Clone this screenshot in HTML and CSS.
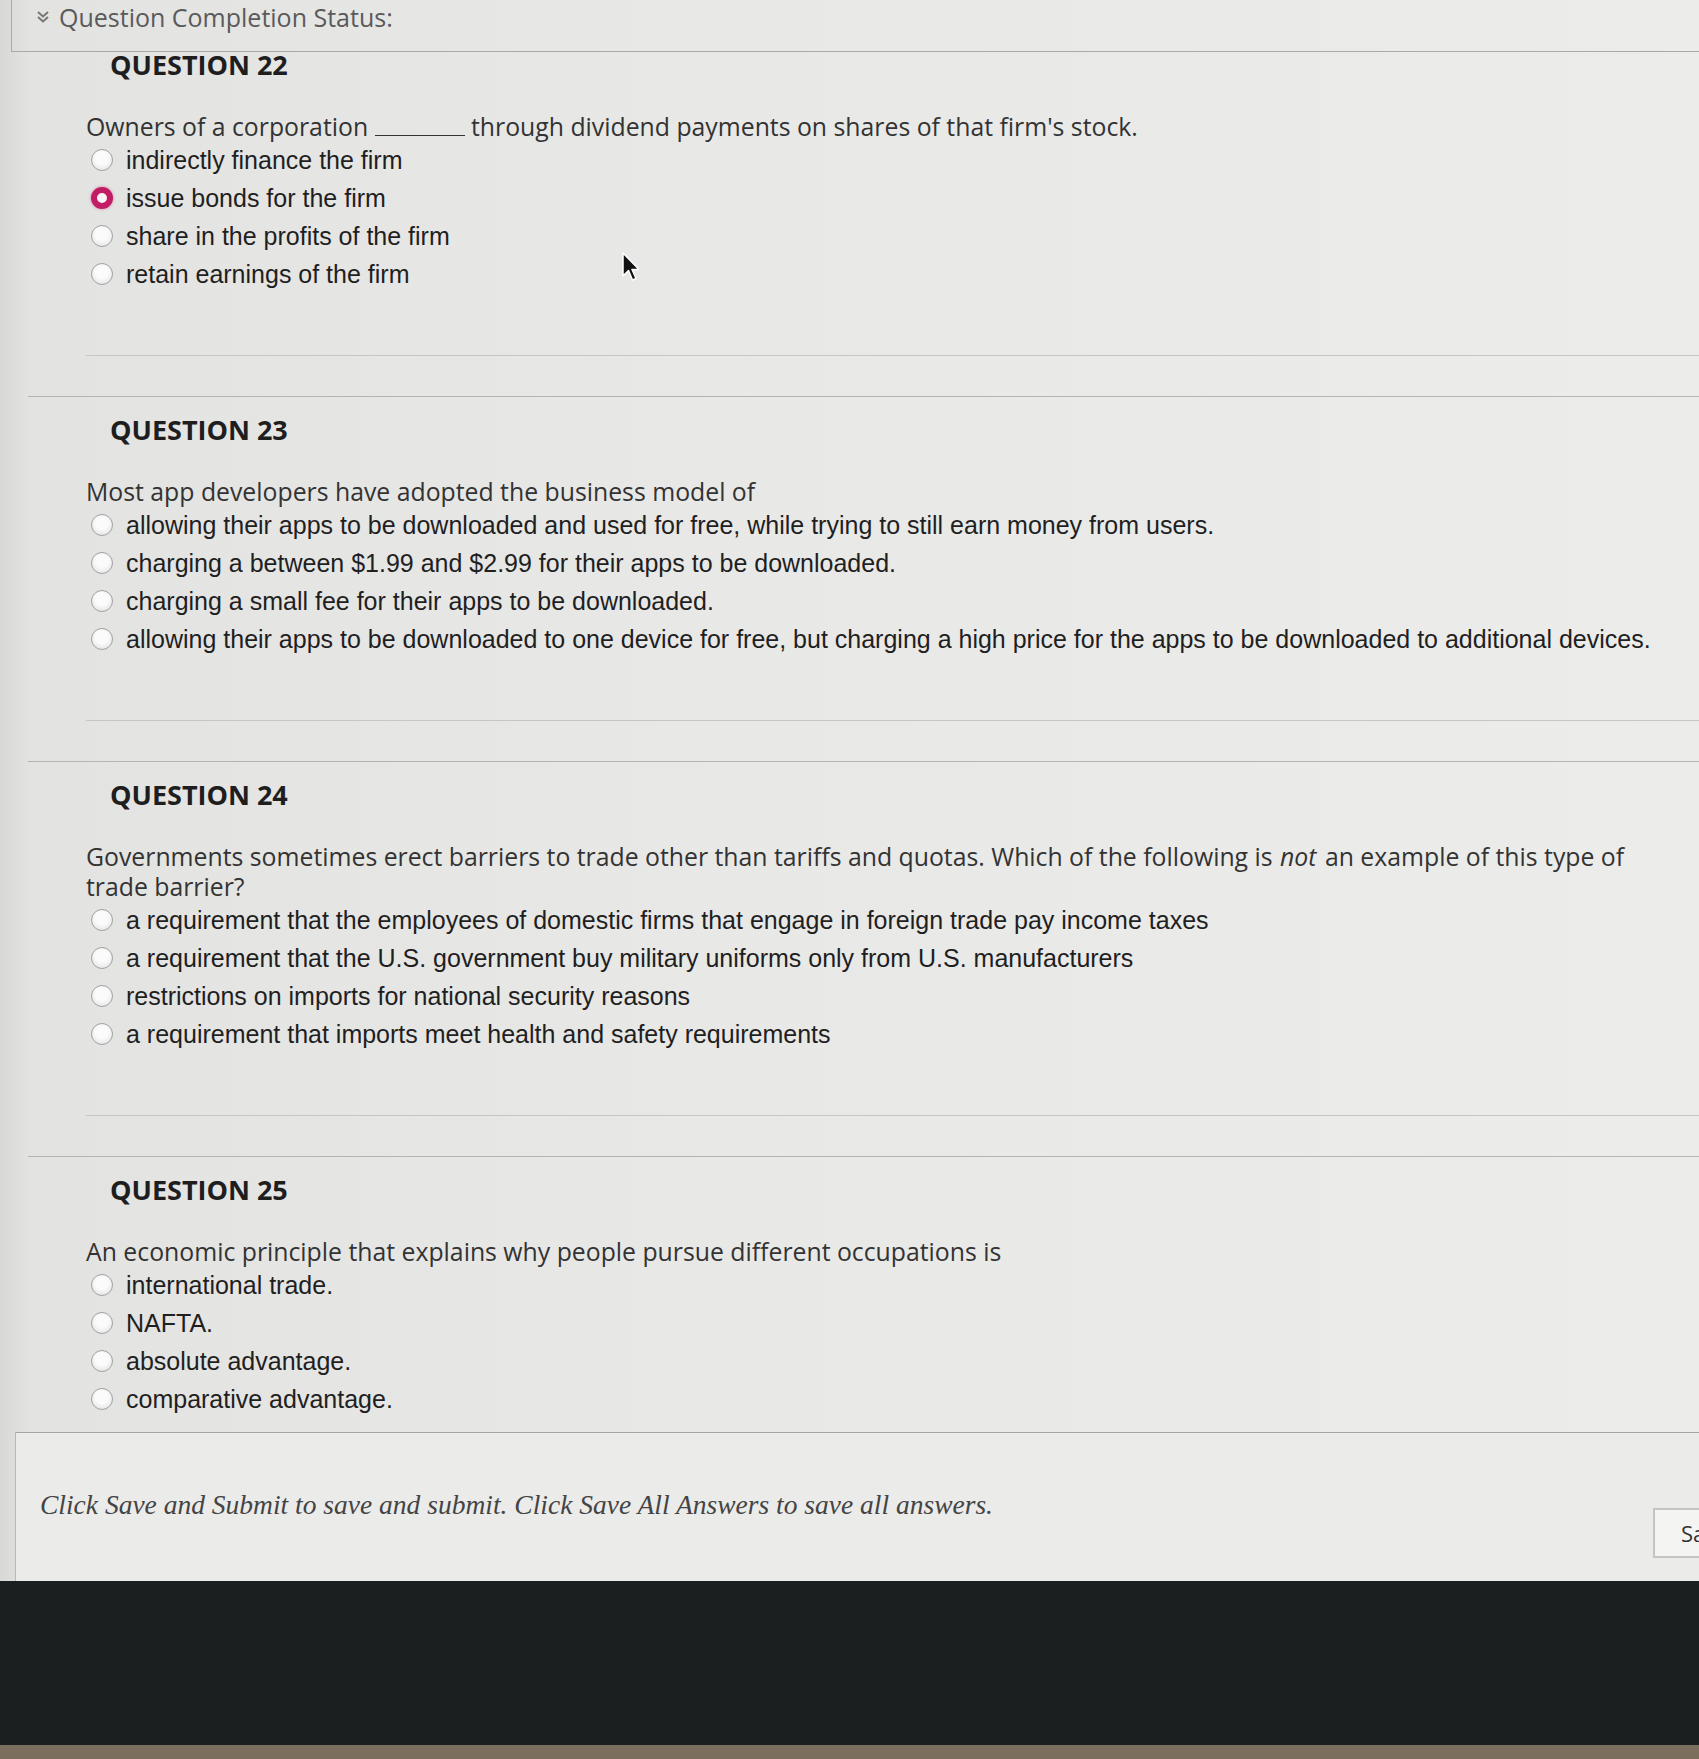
FILE: index.html
```
<!DOCTYPE html>
<html lang="en">
<head>
    <meta charset="UTF-8">
    <meta name="viewport" content="width=device-width, initial-scale=1.0">
    <title>Take Test</title>
    <link rel="stylesheet" href="styles.css">
</head>
<body>

<div class="screen">
    <div class="status">
        <svg class="chev" width="14" height="14" viewBox="0 0 14 14">
            <polyline points="2,2 7,6.5 12,2" fill="none" stroke="#777" stroke-width="2"/>
            <polyline points="2,7 7,11.5 12,7" fill="none" stroke="#777" stroke-width="2"/>
        </svg>
        <span>Question Completion Status:</span>
    </div>

    <div class="question first">
        <div class="qbody">
            <h2 class="qtitle">QUESTION 22</h2>
            <div class="prompt">Owners of a corporation <span class="blank"></span> through dividend payments on shares of that firm's stock.</div>
            <ul class="options">
                <li><span class="radio"></span>indirectly finance the firm</li>
                <li><span class="radio checked"></span>issue bonds for the firm</li>
                <li><span class="radio"></span>share in the profits of the firm</li>
                <li><span class="radio"></span>retain earnings of the firm</li>
            </ul>
        </div>
    </div>

    <div class="question">
        <div class="qbody">
            <h2 class="qtitle">QUESTION 23</h2>
            <div class="prompt">Most app developers have adopted the business model of</div>
            <ul class="options">
                <li><span class="radio"></span>allowing their apps to be downloaded and used for free, while trying to still earn money from users.</li>
                <li><span class="radio"></span>charging a between $1.99 and $2.99 for their apps to be downloaded.</li>
                <li><span class="radio"></span>charging a small fee for their apps to be downloaded.</li>
                <li><span class="radio"></span>allowing their apps to be downloaded to one device for free, but charging a high price for the apps to be downloaded to additional devices.</li>
            </ul>
        </div>
    </div>

    <div class="question">
        <div class="qbody">
            <h2 class="qtitle">QUESTION 24</h2>
            <div class="prompt">Governments sometimes erect barriers to trade other than tariffs and quotas. Which of the following is <em>not</em> an example of this type of trade barrier?</div>
            <ul class="options">
                <li><span class="radio"></span>a requirement that the employees of domestic firms that engage in foreign trade pay income taxes</li>
                <li><span class="radio"></span>a requirement that the U.S. government buy military uniforms only from U.S. manufacturers</li>
                <li><span class="radio"></span>restrictions on imports for national security reasons</li>
                <li><span class="radio"></span>a requirement that imports meet health and safety requirements</li>
            </ul>
        </div>
    </div>

    <div class="question last">
        <div class="qbody">
            <h2 class="qtitle">QUESTION 25</h2>
            <div class="prompt">An economic principle that explains why people pursue different occupations is</div>
            <ul class="options">
                <li><span class="radio"></span>international trade.</li>
                <li><span class="radio"></span>NAFTA.</li>
                <li><span class="radio"></span>absolute advantage.</li>
                <li><span class="radio"></span>comparative advantage.</li>
            </ul>
        </div>
    </div>

    <div class="footer">
        <p class="hint">Click Save and Submit to save and submit. Click Save All Answers to save all answers.</p>
        <button class="btn">Save All Answers</button>
    </div>

    <!-- mouse pointer sitting over the page -->
    <svg class="pointer" width="18" height="30" viewBox="0 0 18 30">
        <path d="M2 1 L2 24 L7.5 18.5 L11.5 28 L15 26.5 L11 17.5 L18 17.5 Z" fill="#111" stroke="#fff" stroke-width="1.5" stroke-linejoin="round"/>
    </svg>
</div>

<div class="bezel">
    <div class="desk"></div>
</div>

</body>
</html>
```

FILE: styles.css
```
html, body {
    margin: 0;
    height: 100%;
    overflow: hidden;
}
body {
    background-color: #1c1f20;
    font-family: 'Open Sans', 'Liberation Sans', sans-serif;
}
.screen {
    position: relative;
    height: 1581px;
    background: linear-gradient(to right, #d8d8d7 0px, #e3e3e2 30px, #e8e8e7 700px, #ececeb 1699px);
    overflow: hidden;
}
.status {
    display: flex;
    align-items: center;
    gap: 9px;
    margin-left: 11px;
    height: 34px;
    padding: 0 0 17px 24px;
    border-left: 1px solid #a9a9a9;
    border-bottom: 1px solid #a9a9a9;
    font-size: 25px;
    line-height: 34px;
    color: #5a5a5a;
}
.chev {
    flex: none;
}
.question {
    margin-left: 28px;
    padding: 17px 0 40px 0;
    border-bottom: 1px solid #b4b4b4;
}
.question.first {
    margin-top: -3px;
    padding-top: 0;
}
.question.last {
    border-bottom: none;
    padding-bottom: 14px;
}
.qbody {
    margin-left: 58px;
    padding-bottom: 62px;
    border-bottom: 1px solid #c6c6c6;
}
.question.last .qbody {
    border-bottom: none;
    padding-bottom: 0;
}
.qtitle {
    margin: 0;
    padding-left: 24px;
    font-size: 27px;
    line-height: 32px;
    font-weight: 700;
    color: #1e1e1e;
}
.prompt {
    margin-top: 30px;
    padding-right: 40px;
    font-size: 24.8px;
    line-height: 30px;
    color: #333;
}
.prompt em {
    padding: 0 2px 0 1px;
}
.blank {
    display: inline-block;
    width: 90px;
    border-bottom: 1px solid #333;
}
.options {
    list-style: none;
    margin: 0;
    padding: 0 0 0 5px;
    font-family: 'Liberation Sans', Arial, sans-serif;
    font-size: 25px;
    color: #1f1f1f;
}
.options li {
    display: flex;
    align-items: center;
    gap: 13px;
    height: 38px;
    white-space: nowrap;
}
.radio {
    flex: none;
    width: 20px;
    height: 20px;
    border-radius: 50%;
    border: 1px solid #a2a2a2;
    background: radial-gradient(circle at 50% 40%, #fbfbfb 40%, #dcdcdc 100%);
}
.radio.checked {
    width: 10px;
    height: 10px;
    border: 6px solid #c21c64;
    background: #fdf4f8;
    box-shadow: 0 0 3px rgba(194, 28, 100, 0.5);
}
.footer {
    display: flex;
    justify-content: space-between;
    align-items: flex-start;
    margin-left: 15px;
    height: 94px;
    padding: 56px 0 0 24px;
    border-top: 1px solid #a4a4a4;
    border-left: 1px solid #b8b8b8;
    background-color: #ebebea;
    overflow: hidden;
}
.hint {
    margin: 0;
    font-family: 'Liberation Serif', serif;
    font-style: italic;
    font-size: 27.5px;
    line-height: 32px;
    color: #444;
}
.btn {
    flex: none;
    margin-top: 19px;
    margin-right: -160px;
    width: 206px;
    height: 50px;
    padding: 0 0 0 26px;
    text-align: left;
    font-family: 'Open Sans', sans-serif;
    font-size: 22px;
    color: #333;
    background-color: #f4f4f3;
    border: 2px solid #c4c4c4;
}
.pointer {
    position: absolute;
    left: 621px;
    top: 252px;
}
.bezel {
    height: 178px;
    display: flex;
    flex-direction: column;
    justify-content: flex-end;
}
.desk {
    height: 14px;
    background-color: #7b6e5c;
}
```
